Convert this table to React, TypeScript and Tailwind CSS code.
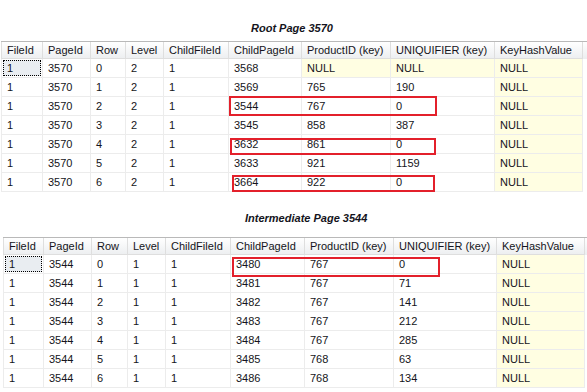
const cols = [
  { name: "FileId" },
  { name: "PageId" },
  { name: "Row" },
  { name: "Level" },
  { name: "ChildFileId" },
  { name: "ChildPageId" },
  { name: "ProductID (key)" },
  { name: "UNIQUIFIER (key)" },
  { name: "KeyHashValue" },
];

const widthsTop = ["w-[42px]", "w-[48px]", "w-[35px]", "w-[38px]", "w-[65px]", "w-[73px]", "w-[89px]", "w-[104px]", "w-[88px]"];
const widthsBottom = ["w-[41px]", "w-[48px]", "w-[36px]", "w-[38px]", "w-[65px]", "w-[74px]", "w-[89px]", "w-[103px]", "w-[88px]"];

const rootRows = [
  ["1", "3570", "0", "2", "1", "3568", "NULL", "NULL", "NULL"],
  ["1", "3570", "1", "2", "1", "3569", "765", "190", "NULL"],
  ["1", "3570", "2", "2", "1", "3544", "767", "0", "NULL"],
  ["1", "3570", "3", "2", "1", "3545", "858", "387", "NULL"],
  ["1", "3570", "4", "2", "1", "3632", "861", "0", "NULL"],
  ["1", "3570", "5", "2", "1", "3633", "921", "1159", "NULL"],
  ["1", "3570", "6", "2", "1", "3664", "922", "0", "NULL"],
];

const interRows = [
  ["1", "3544", "0", "1", "1", "3480", "767", "0", "NULL"],
  ["1", "3544", "1", "1", "1", "3481", "767", "71", "NULL"],
  ["1", "3544", "2", "1", "1", "3482", "767", "141", "NULL"],
  ["1", "3544", "3", "1", "1", "3483", "767", "212", "NULL"],
  ["1", "3544", "4", "1", "1", "3484", "767", "285", "NULL"],
  ["1", "3544", "5", "1", "1", "3485", "768", "63", "NULL"],
  ["1", "3544", "6", "1", "1", "3486", "768", "134", "NULL"],
];

function Grid({ rows, widths, yellowKeysRow0 }: { rows: string[][]; widths: string[]; yellowKeysRow0?: boolean }) {
  return (
    <div className="flex flex-col">
      <div className="flex h-[18px] border-t border-[#b9b9b9] bg-gradient-to-b from-white to-[#eceef0]">
        {cols.map((c, i) => (
          <div
            key={c.name}
            className={`${widths[i]} shrink-0 border-r border-b border-[#dedede] pl-[5px] leading-[16px] whitespace-nowrap ${i === 0 ? "border-l" : ""}`}
          >
            {c.name}
          </div>
        ))}
      </div>
      {rows.map((r, ri) => (
        <div key={ri} className="flex h-[19px]">
          {r.map((v, ci) => {
            const yellow = ci === 8 || (yellowKeysRow0 && ri === 0 && (ci === 6 || ci === 7));
            const focus = ri === 0 && ci === 0;
            return (
              <div
                key={ci}
                className={`${widths[ci]} shrink-0 border-r border-b border-[#ececec] leading-[18px] ${ci === 0 ? "border-l" : ""} ${yellow ? "bg-[#fffee2]" : ""} ${focus ? "p-[1px]" : "pl-[5px]"}`}
              >
                {focus ? (
                  <div className="h-full border border-dotted border-black bg-[#e9edf1] pl-[3px] leading-[15px]">{v}</div>
                ) : (
                  v
                )}
              </div>
            );
          })}
        </div>
      ))}
    </div>
  );
}

function RedBox({ className }: { className: string }) {
  return <div className={`absolute border-2 border-[#e3202b] ${className}`} />;
}

export default function App() {
  return (
    <div
      className="relative w-[587px] h-[392px] overflow-hidden bg-white text-[11px] text-[#141420]"
      style={{ fontFamily: '"Liberation Sans", Arial, sans-serif' }}
    >
      <div className="h-[41px] pt-[22px] pl-[251px] font-bold italic leading-[13px]">Root Page 3570</div>
      <div className="pl-[1px]">
        <Grid rows={rootRows} widths={widthsTop} yellowKeysRow0 />
      </div>
      <div className="h-[45px] pt-[20px] pl-[245px] font-bold italic leading-[13px]">Intermediate Page 3544</div>
      <div className="pl-[3px]">
        <Grid rows={interRows} widths={widthsBottom} />
      </div>

      <RedBox className="left-[229px] top-[96px] w-[208px] h-[20px]" />
      <RedBox className="left-[230px] top-[138px] w-[206px] h-[17px]" />
      <RedBox className="left-[232px] top-[175px] w-[203px] h-[17px]" />
      <RedBox className="left-[232px] top-[257px] w-[208px] h-[20px]" />
    </div>
  );
}
